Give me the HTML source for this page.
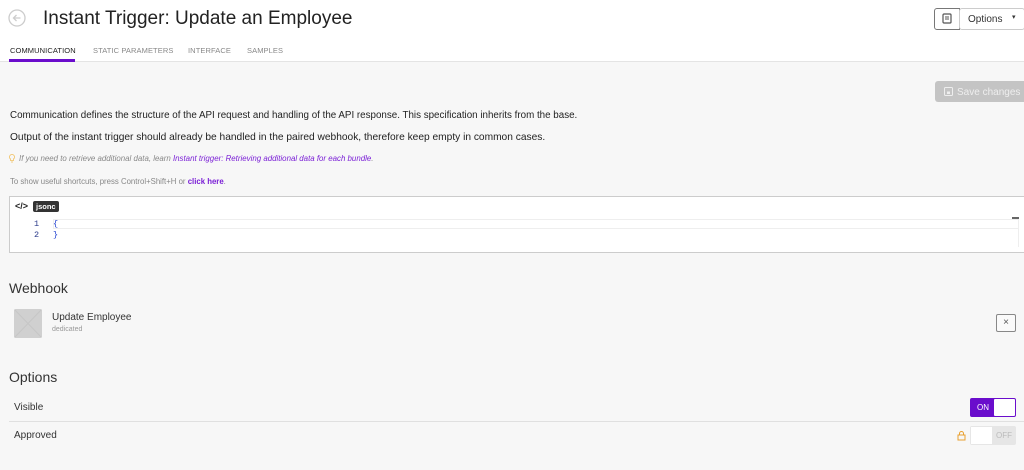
<!DOCTYPE html>
<html><head><meta charset="utf-8"><style>
*{box-sizing:border-box;margin:0;padding:0}
body{width:1024px;height:470px;overflow:hidden;background:#f7f7f7;font-family:"Liberation Sans",sans-serif;color:#222;position:relative}
.abs{position:absolute}
.hdr{position:absolute;left:0;top:0;width:1024px;height:62px;background:#fff;border-bottom:1px solid #e4e4e4}
.tab{position:absolute;top:46px;font-size:7.5px;color:#888;letter-spacing:.1px}
p.t{position:absolute;left:10px;font-size:10px;color:#222}
</style></head><body>
<div class="hdr">
 <svg class="abs" style="left:8px;top:9px" width="18" height="18" viewBox="0 0 18 18"><circle cx="9" cy="9" r="8" fill="none" stroke="#ccc" stroke-width="1.3"/><path d="M12.5 9H5.5M8.5 6L5.5 9L8.5 12" fill="none" stroke="#ccc" stroke-width="1.3"/></svg>
 <div class="abs" style="left:43px;top:8px;font-size:19px;color:#222">Instant Trigger: Update an Employee</div>
 <div class="tab" style="left:10px;color:#222">COMMUNICATION</div>
 <div class="abs" style="left:9px;top:59px;width:66px;height:3px;background:#6a0dcc"></div>
 <div class="tab" style="left:93px">STATIC PARAMETERS</div>
 <div class="tab" style="left:188px">INTERFACE</div>
 <div class="tab" style="left:247px">SAMPLES</div>
 <div class="abs" style="left:934px;top:8px;width:26px;height:22px;border:1px solid #777;border-radius:3px 0 0 3px"><svg class="abs" style="left:7px;top:4px" width="10" height="12" viewBox="0 0 10 12"><rect x="1" y="1" width="8" height="9" rx="1" fill="none" stroke="#555" stroke-width="1.2"/><path d="M3 4h4M3 6h4" stroke="#555"/></svg></div>
 <div class="abs" style="left:959px;top:8px;width:66px;height:22px;border:1px solid #ccc;border-radius:3px;font-size:10px;color:#333;padding:5px 0 0 8px">Options<span style="position:absolute;left:52px;top:4px;font-size:7px">▾</span></div>
</div>
<div class="abs" style="left:935px;top:81px;width:92px;height:21px;background:#c4c4c4;border-radius:3px;color:#eee;font-size:10px;padding:6px 0 0 22px">Save changes<svg class="abs" style="left:9px;top:6px" width="9" height="9" viewBox="0 0 9 9"><rect x=".5" y=".5" width="8" height="8" rx="1" fill="none" stroke="#eee"/><rect x="3" y="4.5" width="3" height="2.5" fill="#eee"/></svg></div>
<p class="t" style="top:110px;font-size:9.8px">Communication defines the structure of the API request and handling of the API response. This specification inherits from the base.</p>
<p class="t" style="top:132px;font-size:10.2px">Output of the instant trigger should already be handled in the paired webhook, therefore keep empty in common cases.</p>
<svg class="abs" style="left:9px;top:154px" width="6" height="9" viewBox="0 0 6 9"><path d="M3 .5a2.5 2.5 0 0 1 1.5 4.5V6.5H1.5V5A2.5 2.5 0 0 1 3 .5zM2 8h2" fill="none" stroke="#f0c060" stroke-width=".8"/></svg>
<div class="abs" style="left:19px;top:154px;font-size:7.9px;font-style:italic;color:#888">If you need to retrieve additional data, learn <span style="color:#7a1fd6">Instant trigger: Retrieving additional data for each bundle</span>.</div>
<div class="abs" style="left:10px;top:177px;font-size:7.8px;color:#888">To show useful shortcuts, press Control+Shift+H or <span style="color:#7a1fd6;font-weight:bold">click here</span>.</div>
<div class="abs" style="left:9px;top:196px;width:1020px;height:57px;background:#fff;border:1px solid #ccc">
 <div class="abs" style="left:5px;top:4px;font-size:9px;color:#222;font-weight:bold">&lt;/&gt;</div>
 <div class="abs" style="left:23px;top:4px;background:#333;color:#fff;font-size:7.5px;font-weight:bold;padding:1px 3px;border-radius:2px">jsonc</div>
 <div class="abs" style="left:43px;top:22px;width:966px;height:10px;border:1px solid #eee"></div>
 <div class="abs" style="left:24px;top:22px;font-family:'Liberation Mono',monospace;font-size:8.5px;line-height:11px;color:#2a3a8a">1<br>2</div>
 <div class="abs" style="left:43px;top:22px;font-family:'Liberation Mono',monospace;font-size:8.5px;line-height:11px;color:#2040d0">{<br>}</div>
 <div class="abs" style="left:1002px;top:20px;width:7px;height:2px;background:#666"></div>
 <div class="abs" style="left:1008px;top:22px;width:1px;height:28px;background:#eee"></div>
</div>
<div class="abs" style="left:9px;top:280px;font-size:14px;color:#333">Webhook</div>
<div class="abs" style="left:14px;top:309px;width:28px;height:29px;background:#d0d0d0;border-radius:2px;overflow:hidden"><svg width="28" height="29"><path d="M0 0L28 29M28 0L0 29" stroke="#c6c6c6"/></svg></div>
<div class="abs" style="left:52px;top:312px;font-size:10px;color:#333">Update Employee</div>
<div class="abs" style="left:52px;top:326px;font-size:7px;color:#999">dedicated</div>
<div class="abs" style="left:996px;top:314px;width:20px;height:18px;border:1px solid #888;border-radius:2px;background:#fafafa;text-align:center;font-size:10px;line-height:15px;color:#555">×</div>
<div class="abs" style="left:9px;top:369px;font-size:14px;color:#333">Options</div>
<div class="abs" style="left:14px;top:402px;font-size:10px;color:#333">Visible</div>
<div class="abs" style="left:970px;top:398px;width:46px;height:19px;background:#6a0dcc;border-radius:2px"><span class="abs" style="left:7px;top:5px;font-size:8px;color:#fff">ON</span><div class="abs" style="left:24px;top:1px;width:21px;height:17px;background:#fff;border-radius:1px"></div></div>
<div class="abs" style="left:9px;top:421px;width:1015px;height:1px;background:#e0e0e0"></div>
<div class="abs" style="left:14px;top:430px;font-size:10px;color:#333">Approved</div>
<svg class="abs" style="left:957px;top:430px" width="9" height="11" viewBox="0 0 9 11"><path d="M2.5 5V3.5a2 2 0 0 1 4 0V5" fill="none" stroke="#e8a030"/><rect x="1" y="5" width="7" height="5" fill="none" stroke="#e8a030"/></svg>
<div class="abs" style="left:970px;top:426px;width:46px;height:19px;background:#e6e6e6;border-radius:2px"><div class="abs" style="left:1px;top:1px;width:21px;height:17px;background:#fff"></div><span class="abs" style="left:26px;top:5px;font-size:8px;color:#bbb">OFF</span></div>
</body></html>
